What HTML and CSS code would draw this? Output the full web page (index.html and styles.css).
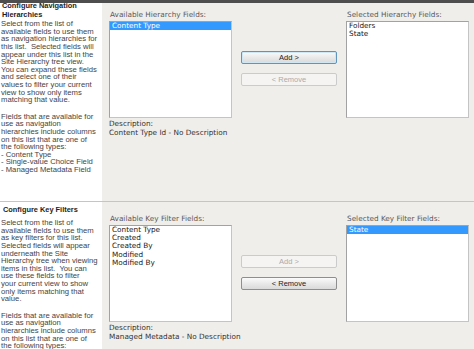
FILE: index.html
```html
<!DOCTYPE html>
<html lang="en">
<head>
    <meta charset="UTF-8">
    <title>Site Hierarchy Settings</title>
    <link rel="stylesheet" href="styles.css">
</head>
<body>
    <div class="topbar"></div>

    <div class="section section-hierarchy">
        <div class="info">
            <h2>Configure Navigation<br>Hierarchies</h2>
            <p>Select from the list of<br>
            available fields to use them<br>
            as navigation hierarchies for<br>
            this list.&nbsp; Selected fields will<br>
            appear under this list in the<br>
            Site Hierarchy tree view.<br>
            You can expand these fields<br>
            and select one of their<br>
            values to filter your current<br>
            view to show only items<br>
            matching that value.</p>
            <p>Fields that are available for<br>
            use as navigation<br>
            hierarchies include columns<br>
            on this list that are one of<br>
            the following types:<br>
            - Content Type<br>
            - Single-value Choice Field<br>
            - Managed Metadata Field</p>
        </div>
        <div class="fields">
            <div class="label">Available Hierarchy Fields:</div>
            <div></div>
            <div class="label">Selected Hierarchy Fields:</div>

            <ul class="listbox">
                <li class="selected">Content Type</li>
            </ul>
            <div class="actions">
                <button class="btn focused">Add &gt;</button>
                <button class="btn" disabled>&lt; Remove</button>
            </div>
            <ul class="listbox">
                <li>Folders</li>
                <li>State</li>
            </ul>

            <div class="description">Description:<br>Content Type Id - No Description</div>
        </div>
    </div>

    <div class="section section-filters">
        <div class="info">
            <h2>Configure Key Filters</h2>
            <p>Select from the list of<br>
            available fields to use them<br>
            as key filters for this list.<br>
            Selected fields will appear<br>
            underneath the Site<br>
            Hierarchy tree when viewing<br>
            items in this list.&nbsp; You can<br>
            use these fields to filter<br>
            your current view to show<br>
            only items matching that<br>
            value.</p>
            <p>Fields that are available for<br>
            use as navigation<br>
            hierarchies include columns<br>
            on this list that are one of<br>
            the following types:</p>
        </div>
        <div class="fields">
            <div class="label">Available Key Filter Fields:</div>
            <div></div>
            <div class="label">Selected Key Filter Fields:</div>

            <ul class="listbox">
                <li>Content Type</li>
                <li>Created</li>
                <li>Created By</li>
                <li>Modified</li>
                <li>Modified By</li>
            </ul>
            <div class="actions">
                <button class="btn" disabled>Add &gt;</button>
                <button class="btn">&lt; Remove</button>
            </div>
            <ul class="listbox">
                <li class="selected">State</li>
            </ul>

            <div class="description">Description:<br>Managed Metadata - No Description</div>
        </div>
    </div>
</body>
</html>
```

FILE: styles.css
```css
body {
    margin: 0;
    width: 474px;
    height: 349px;
    overflow: hidden;
    background-color: #f0eeea;
    font-family: "DejaVu Sans", Verdana, sans-serif;
}
.topbar {
    position: relative;
    z-index: 1;
    height: 3px;
    background-color: #4e4e4e;
}
.section {
    display: grid;
    grid-template-columns: 102px 1fr;
}
.section-hierarchy {
    height: 198px;
    border-bottom: 1px solid #c9c5bd;
}
.section-filters {
    height: 147px;
}
.info {
    background-color: #fff;
    padding: 0 1px 0 1px;
    font-family: "Liberation Sans", Arial, sans-serif;
    font-size: 7.7px;
    line-height: 7.6px;
    color: #444;
    overflow: hidden;
}
.info h2 {
    margin: -2.5px 0 1.7px 1px;
    font-size: 7.4px;
    line-height: 9px;
    color: #1e1e1e;
    white-space: nowrap;
}
.section-filters .info h2 {
    margin: 2.5px 0 5.7px 2px;
}
.info p {
    margin: 0 0 9px 0;
    white-space: nowrap;
}
.fields {
    display: grid;
    grid-template-columns: 123px 96px 123px;
    grid-template-rows: auto 97px auto;
    column-gap: 9px;
    align-content: start;
    padding: 6.5px 0 0 7px;
}
.section-filters .fields {
    padding-top: 11.5px;
}
.label {
    font-size: 7.3px;
    line-height: 9px;
    color: #5a5a5a;
    margin: 0 0 2px 1px;
}
.listbox {
    margin: 0;
    padding: 0;
    list-style: none;
    box-sizing: border-box;
    height: 97px;
    background-color: #fff;
    border: 1px solid #a2a2a2;
    border-right-color: #c4c4c4;
    border-bottom-color: #c4c4c4;
    font-size: 7.3px;
    line-height: 8.4px;
    color: #202020;
}
.listbox li {
    padding-left: 2px;
}
.listbox li.selected {
    background-color: #3399ff;
    color: #fff;
}
.actions {
    display: flex;
    flex-direction: column;
    gap: 9px;
    padding-top: 30px;
}
.btn {
    box-sizing: border-box;
    height: 13px;
    padding: 0;
    border: 1px solid #8e8e8e;
    border-radius: 2px;
    background: linear-gradient(#fbfbfb, #e9e9e9 50%, #dadada);
    font-family: "Liberation Sans", Arial, sans-serif;
    font-size: 7.5px;
    color: #222;
}
.btn.focused {
    border-color: #5f94bd;
    box-shadow: inset 0 0 0 1px #cfe6f5;
}
.btn:disabled {
    border-color: #cbcbcb;
    background: #f5f4f2;
    color: #ababab;
}
.description {
    grid-column: 1 / 3;
    margin-top: 1.5px;
    font-size: 7.3px;
    line-height: 9px;
    color: #333;
}
```
